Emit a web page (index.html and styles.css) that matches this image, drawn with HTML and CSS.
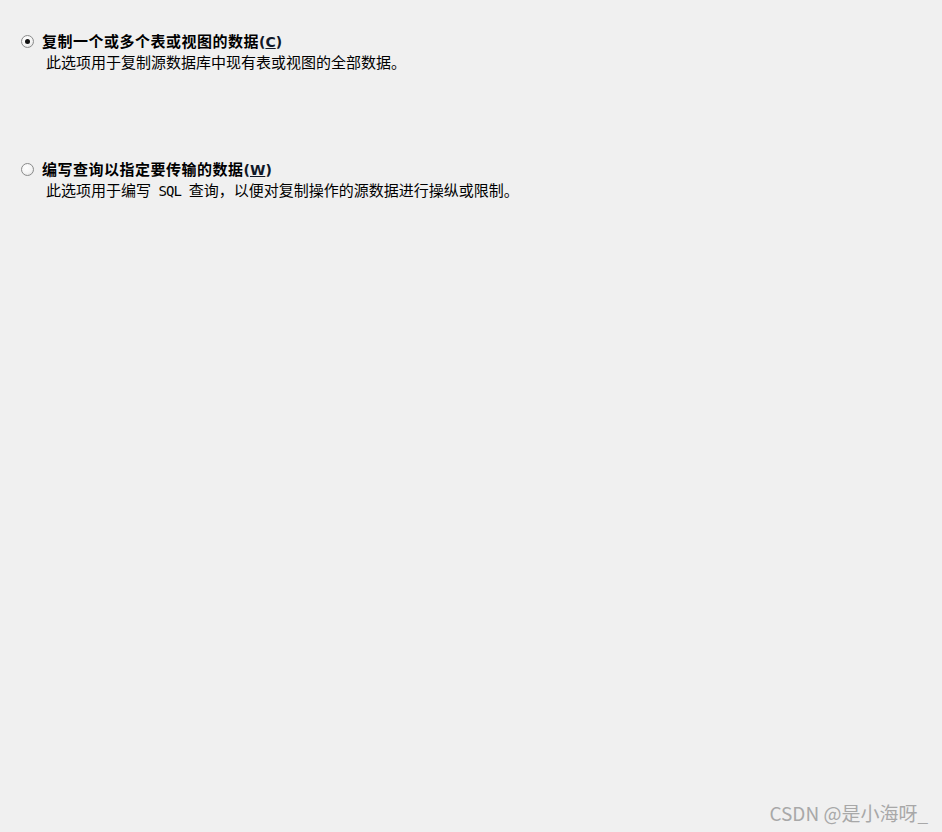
FILE: index.html
```html
<!DOCTYPE html>
<html lang="zh-CN">
<head>
<meta charset="utf-8">
<link rel="stylesheet" href="styles.css">
</head>
<body>
<div class="page">
  <div class="option">
    <div class="option-head">
      <span class="radio checked"></span>
      <span class="title">复制一个或多个表或视图的数据<span class="key">(<u>C</u>)</span></span>
    </div>
    <div class="desc">此选项用于复制源数据库中现有表或视图的全部数据。</div>
  </div>
  <div class="option second">
    <div class="option-head">
      <span class="radio"></span>
      <span class="title">编写查询以指定要传输的数据<span class="key">(<u>W</u>)</span></span>
    </div>
    <div class="desc">此选项用于编写<span class="mono"> SQL </span>查询，以便对复制操作的源数据进行操纵或限制。</div>
  </div>
</div>
<div class="watermark">CSDN @是小海呀_</div>
</body>
</html>
```
FILE: styles.css
```css
html, body {
  margin: 0;
  padding: 0;
  background: #f0f0f0;
  width: 942px;
  height: 832px;
  overflow: hidden;
}
.page {
  padding: 32px 0 0 21px;
  font-family: "Noto Sans CJK SC", "Liberation Sans", sans-serif;
  color: #000;
}
.option {
  display: flex;
  flex-direction: column;
}
.option.second {
  margin-top: 88px;
}
.option-head {
  display: flex;
  align-items: center;
  height: 18px;
}
.radio {
  box-sizing: border-box;
  width: 13px;
  height: 13px;
  border-radius: 50%;
  border: 1px solid #8a8b8b;
  background: radial-gradient(circle at 40% 35%, #ffffff 0%, #f4f4f4 55%, #d6d6d6 100%);
  position: relative;
  margin-right: 8px;
  flex: none;
}
.radio.checked::after {
  content: "";
  position: absolute;
  left: 3px;
  top: 3px;
  width: 5px;
  height: 5px;
  border-radius: 50%;
  background: #111;
}
.title {
  font-size: 15px;
  font-weight: bold;
  line-height: 18px;
  white-space: nowrap;
  letter-spacing: 0.5px;
}
.key {
  font-family: "DejaVu Sans", "Liberation Sans", sans-serif;
  font-size: 14px;
  font-weight: bold;
  letter-spacing: 0;
  color: #101828;
}
.desc {
  margin-left: 25px;
  margin-top: 2px;
  font-size: 15px;
  line-height: 20px;
  height: 20px;
  white-space: pre;
}
.mono {
  font-family: "DejaVu Sans Mono", "Liberation Mono", monospace;
  font-size: 14px;
  letter-spacing: -0.9px;
}
.watermark {
  position: absolute;
  right: 14px;
  bottom: 8px;
  font-family: "Noto Sans CJK SC", "Liberation Sans", sans-serif;
  font-size: 19px;
  color: #a8a8a8;
  line-height: 22px;
}
```
